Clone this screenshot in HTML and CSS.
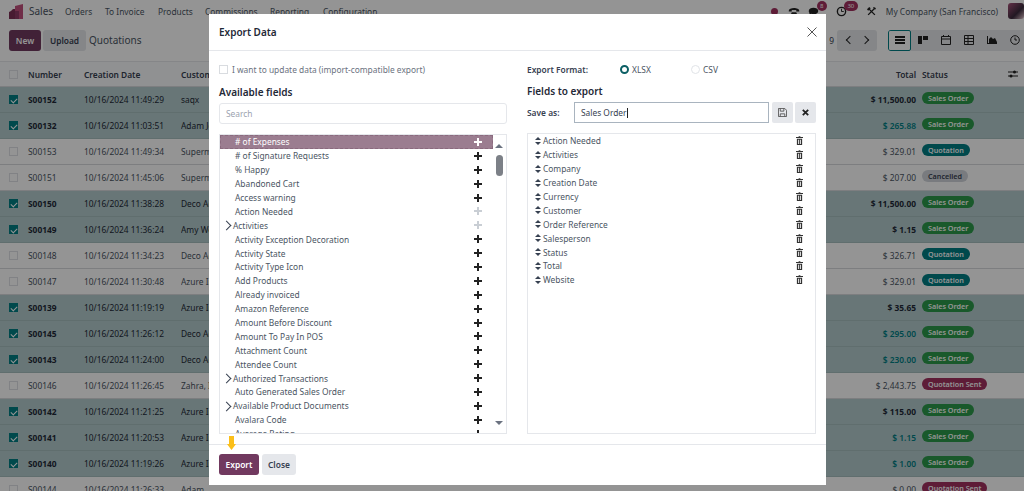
FILE: index.html
```html
<!DOCTYPE html>
<html lang="en">
<head>
<meta charset="utf-8">
<title>Quotations - Export Data</title>
<link rel="stylesheet" href="styles.css">
</head>
<body>
<div class="page">
  <header class="nav">
    <svg class="logo" viewBox="0 0 15 16"><path fill="#7c2f55" d="M0 9l2-1 2-2 2 0v10H0z"/><path fill="#c2507c" d="M6 3l8-2v15H6z"/><path fill="#8e3a64" d="M6 8h4v8H6z"/></svg>
    <span class="brand">Sales</span>
    <span class="m m1">Orders</span><span class="m m2">To Invoice</span><span class="m m3">Products</span><span class="m m4">Commissions</span><span class="m m5">Reporting</span><span class="m m6">Configuration</span>
    <div class="nav-right">
      <span class="dot"></span>
      <svg class="ni phone" viewBox="0 0 16 14"><path fill="#222" d="M1 6c0-5 14-5 14 0v1h-4V5H5v2H1zM5 8h6l2 5H3z"/></svg>
      <span class="ni-wrap chat"><svg class="ni" viewBox="0 0 14 12"><path fill="#222" d="M1 5c0-5 12-5 12 0s-7 5-9 4l-3 2 1-3c-1-1-1-2-1-3z"/></svg><b class="badge">8</b></span>
      <span class="ni-wrap act"><svg class="ni" viewBox="0 0 12 12"><circle cx="6" cy="6" r="4.500" fill="none" stroke="#222" stroke-width="1.500"/><path d="M6 3v3h2.500" fill="none" stroke="#222"/></svg><b class="badge wide">30</b></span>
      <svg class="ni tools" viewBox="0 0 12 12"><path d="M2.500 2.500l8 8M10 2l-8.500 8.500" stroke="#222" stroke-width="1.800"/><path d="M0 3l3-3 2 1.500L1.500 5zM8 0c2 0 4 1 4 3l-2 0-1-1z" fill="#222"/></svg>
      <span class="company">My Company (San Francisco)</span>
      <span class="avatar"></span>
    </div>
  </header>

  <div class="panel">
    <button class="btn primary new">New</button>
    <button class="btn upload">Upload</button>
    <span class="crumb">Quotations</span>
    <div class="panel-right">
      <span class="pager-tail">9</span>
      <span class="group"><i class="chev l"></i><i class="chev r"></i></span>
      <span class="views">
        <span class="view on"><svg viewBox="0 0 10 8"><path fill="#222" d="M0 0h10v2H0zM0 3h10v2H0zM0 6h10v2H0z"/></svg></span>
        <span class="view"><svg viewBox="0 0 10 8"><path fill="#222" d="M0 0h4v8H0zM5 0h5v4H5z"/></svg></span>
        <span class="view"><svg viewBox="0 0 10 10"><path fill="none" stroke="#222" d="M.5 1.500h9v8h-9zM.5 4h9M2.500 0v2M7.500 0v2"/></svg></span>
        <span class="view"><svg viewBox="0 0 10 10"><path fill="none" stroke="#222" d="M.5.500h9v9h-9zM.5 3.500h9M.5 6.500h9M4 .5v9"/></svg></span>
        <span class="view"><svg viewBox="0 0 10 8"><path fill="#222" d="M0 0h1v7h9v1H0zM2 3l2-2 2 2 2-1 2 4v1H2z"/></svg></span>
        <span class="view"><svg viewBox="0 0 10 10"><circle cx="5" cy="5" r="4.300" fill="none" stroke="#222"/><path d="M5 2.500V5h2" fill="none" stroke="#222"/></svg></span>
      </span>
    </div>
  </div>

  <div class="table">
    <div class="row head">
      <span class="check"></span><span class="c-num">Number</span><span class="c-date">Creation Date</span><span class="c-cust">Customer</span><span class="c-total">Total</span><span class="c-status">Status</span>
      <svg class="tune" viewBox="0 0 10 10"><path d="M0 3h10M0 7h10" stroke="#222"/><circle cx="6.500" cy="3" r="1.500" fill="#222"/><circle cx="3" cy="7" r="1.500" fill="#222"/></svg>
    </div>
    <div class="row sel"><span class="check on"></span><span class="c-num">S00152</span><span class="c-date">10/16/2024 11:49:29</span><span class="c-cust">saqx</span><span class="c-total strong">$ 11,500.00</span><span class="c-status"><em class="tag green">Sales Order</em></span></div>
    <div class="row sel"><span class="check on"></span><span class="c-num">S00132</span><span class="c-date">10/16/2024 11:03:51</span><span class="c-cust">Adam Jones</span><span class="c-total teal">$ 265.88</span><span class="c-status"><em class="tag green">Sales Order</em></span></div>
    <div class="row"><span class="check"></span><span class="c-num">S00153</span><span class="c-date">10/16/2024 11:49:34</span><span class="c-cust">Supermarket</span><span class="c-total">$ 329.01</span><span class="c-status"><em class="tag blue">Quotation</em></span></div>
    <div class="row"><span class="check"></span><span class="c-num">S00151</span><span class="c-date">10/16/2024 11:45:06</span><span class="c-cust">Supermarket</span><span class="c-total">$ 207.00</span><span class="c-status"><em class="tag grey">Cancelled</em></span></div>
    <div class="row sel"><span class="check on"></span><span class="c-num">S00150</span><span class="c-date">10/16/2024 11:38:28</span><span class="c-cust">Deco Addict</span><span class="c-total strong">$ 11,500.00</span><span class="c-status"><em class="tag green">Sales Order</em></span></div>
    <div class="row sel"><span class="check on"></span><span class="c-num">S00149</span><span class="c-date">10/16/2024 11:36:24</span><span class="c-cust">Amy Wong</span><span class="c-total strong">$ 1.15</span><span class="c-status"><em class="tag green">Sales Order</em></span></div>
    <div class="row"><span class="check"></span><span class="c-num">S00148</span><span class="c-date">10/16/2024 11:34:23</span><span class="c-cust">Deco Addict</span><span class="c-total">$ 326.71</span><span class="c-status"><em class="tag blue">Quotation</em></span></div>
    <div class="row"><span class="check"></span><span class="c-num">S00147</span><span class="c-date">10/16/2024 11:30:48</span><span class="c-cust">Azure Interior</span><span class="c-total">$ 329.01</span><span class="c-status"><em class="tag blue">Quotation</em></span></div>
    <div class="row sel"><span class="check on"></span><span class="c-num">S00139</span><span class="c-date">10/16/2024 11:19:19</span><span class="c-cust">Azure Interior</span><span class="c-total strong">$ 35.65</span><span class="c-status"><em class="tag green">Sales Order</em></span></div>
    <div class="row sel"><span class="check on"></span><span class="c-num">S00145</span><span class="c-date">10/16/2024 11:26:12</span><span class="c-cust">Deco Addict</span><span class="c-total teal">$ 295.00</span><span class="c-status"><em class="tag green">Sales Order</em></span></div>
    <div class="row sel"><span class="check on"></span><span class="c-num">S00143</span><span class="c-date">10/16/2024 11:24:00</span><span class="c-cust">Deco Addict</span><span class="c-total teal">$ 230.00</span><span class="c-status"><em class="tag green">Sales Order</em></span></div>
    <div class="row"><span class="check"></span><span class="c-num">S00146</span><span class="c-date">10/16/2024 11:26:45</span><span class="c-cust">Zahra, Inc</span><span class="c-total">$ 2,443.75</span><span class="c-status"><em class="tag plum">Quotation Sent</em></span></div>
    <div class="row sel"><span class="check on"></span><span class="c-num">S00142</span><span class="c-date">10/16/2024 11:21:25</span><span class="c-cust">Azure Interior</span><span class="c-total strong">$ 115.00</span><span class="c-status"><em class="tag green">Sales Order</em></span></div>
    <div class="row sel"><span class="check on"></span><span class="c-num">S00141</span><span class="c-date">10/16/2024 11:20:53</span><span class="c-cust">Azure Interior</span><span class="c-total teal">$ 1.15</span><span class="c-status"><em class="tag green">Sales Order</em></span></div>
    <div class="row sel"><span class="check on"></span><span class="c-num">S00140</span><span class="c-date">10/16/2024 11:19:26</span><span class="c-cust">Azure Interior</span><span class="c-total teal">$ 1.00</span><span class="c-status"><em class="tag green">Sales Order</em></span></div>
    <div class="row"><span class="check"></span><span class="c-num">S00144</span><span class="c-date">10/16/2024 11:26:33</span><span class="c-cust">Adam</span><span class="c-total">$ 0.00</span><span class="c-status"><em class="tag plum">Quotation Sent</em></span></div>
  </div>
</div>

<div class="backdrop"></div>

<section class="modal">
  <div class="m-head">
    <h4>Export Data</h4>
    <svg class="close" viewBox="0 0 10 10"><path d="M.5.500l9 9M9.500.500l-9 9" stroke="#555" stroke-width="1"/></svg>
  </div>
  <div class="m-body">
    <div class="col">
      <label class="compat"><span class="box"></span>I want to update data (import-compatible export)</label>
      <h5 class="avail">Available fields</h5>
      <div class="search">Search</div>
      <div class="list left">
        <div class="items">
          <div class="f active"><span>#&nbsp;of Expenses</span><i class="plus"></i></div>
          <div class="f"><span># of Signature Requests</span><i class="plus"></i></div>
          <div class="f"><span>% Happy</span><i class="plus"></i></div>
          <div class="f"><span>Abandoned Cart</span><i class="plus"></i></div>
          <div class="f"><span>Access warning</span><i class="plus"></i></div>
          <div class="f"><span>Action Needed</span><i class="plus faint"></i></div>
          <div class="f exp"><span>Activities</span><i class="plus faint"></i></div>
          <div class="f"><span>Activity Exception Decoration</span><i class="plus"></i></div>
          <div class="f"><span>Activity State</span><i class="plus"></i></div>
          <div class="f"><span>Activity Type Icon</span><i class="plus"></i></div>
          <div class="f"><span>Add Products</span><i class="plus"></i></div>
          <div class="f"><span>Already invoiced</span><i class="plus"></i></div>
          <div class="f"><span>Amazon Reference</span><i class="plus"></i></div>
          <div class="f"><span>Amount Before Discount</span><i class="plus"></i></div>
          <div class="f"><span>Amount To Pay In POS</span><i class="plus"></i></div>
          <div class="f"><span>Attachment Count</span><i class="plus"></i></div>
          <div class="f"><span>Attendee Count</span><i class="plus"></i></div>
          <div class="f exp"><span>Authorized Transactions</span><i class="plus"></i></div>
          <div class="f"><span>Auto Generated Sales Order</span><i class="plus"></i></div>
          <div class="f exp"><span>Available Product Documents</span><i class="plus"></i></div>
          <div class="f"><span>Avalara Code</span><i class="plus"></i></div>
          <div class="f"><span>Average Rating</span><i class="plus"></i></div>
        </div>
        <div class="scroll"><i class="up"></i><b class="thumb"></b><i class="down"></i></div>
      </div>
    </div>
    <div class="col wide-col">
      <div class="format"><b>Export Format:</b><span class="radio on"></span><span class="r-label">XLSX</span><span class="radio"></span><span class="r-label">CSV</span></div>
      <h5 class="tofields">Fields to export</h5>
      <div class="save"><b>Save as:</b><div class="input">Sales Order<span class="caret"></span></div>
        <span class="sq"><svg viewBox="0 0 10 10"><path fill="none" stroke="#555" d="M.5.500h7l2 2v7h-9zM2.500.5v3h4v-3M2.500 9.500v-3h5v3"/></svg></span>
        <span class="sq"><svg viewBox="0 0 10 10"><path d="M2 2l6 6M8 2l-6 6" stroke="#222" stroke-width="2"/></svg></span>
      </div>
      <div class="list right">
        <div class="e"><i class="sort"></i><span>Action Needed</span><svg class="trash" viewBox="0 0 8 10"><path fill="#333" d="M3 0h2v1h3v1H0V1h3zM1 3h6v7H1zM2.500 4v5h1V4zM4.500 4v5h1V4z" fill-rule="evenodd"/></svg></div>
        <div class="e"><i class="sort"></i><span>Activities</span><svg class="trash" viewBox="0 0 8 10"><path fill="#333" d="M3 0h2v1h3v1H0V1h3zM1 3h6v7H1zM2.500 4v5h1V4zM4.500 4v5h1V4z" fill-rule="evenodd"/></svg></div>
        <div class="e"><i class="sort"></i><span>Company</span><svg class="trash" viewBox="0 0 8 10"><path fill="#333" d="M3 0h2v1h3v1H0V1h3zM1 3h6v7H1zM2.500 4v5h1V4zM4.500 4v5h1V4z" fill-rule="evenodd"/></svg></div>
        <div class="e"><i class="sort"></i><span>Creation Date</span><svg class="trash" viewBox="0 0 8 10"><path fill="#333" d="M3 0h2v1h3v1H0V1h3zM1 3h6v7H1zM2.500 4v5h1V4zM4.500 4v5h1V4z" fill-rule="evenodd"/></svg></div>
        <div class="e"><i class="sort"></i><span>Currency</span><svg class="trash" viewBox="0 0 8 10"><path fill="#333" d="M3 0h2v1h3v1H0V1h3zM1 3h6v7H1zM2.500 4v5h1V4zM4.500 4v5h1V4z" fill-rule="evenodd"/></svg></div>
        <div class="e"><i class="sort"></i><span>Customer</span><svg class="trash" viewBox="0 0 8 10"><path fill="#333" d="M3 0h2v1h3v1H0V1h3zM1 3h6v7H1zM2.500 4v5h1V4zM4.500 4v5h1V4z" fill-rule="evenodd"/></svg></div>
        <div class="e"><i class="sort"></i><span>Order Reference</span><svg class="trash" viewBox="0 0 8 10"><path fill="#333" d="M3 0h2v1h3v1H0V1h3zM1 3h6v7H1zM2.500 4v5h1V4zM4.500 4v5h1V4z" fill-rule="evenodd"/></svg></div>
        <div class="e"><i class="sort"></i><span>Salesperson</span><svg class="trash" viewBox="0 0 8 10"><path fill="#333" d="M3 0h2v1h3v1H0V1h3zM1 3h6v7H1zM2.500 4v5h1V4zM4.500 4v5h1V4z" fill-rule="evenodd"/></svg></div>
        <div class="e"><i class="sort"></i><span>Status</span><svg class="trash" viewBox="0 0 8 10"><path fill="#333" d="M3 0h2v1h3v1H0V1h3zM1 3h6v7H1zM2.500 4v5h1V4zM4.500 4v5h1V4z" fill-rule="evenodd"/></svg></div>
        <div class="e"><i class="sort"></i><span>Total</span><svg class="trash" viewBox="0 0 8 10"><path fill="#333" d="M3 0h2v1h3v1H0V1h3zM1 3h6v7H1zM2.500 4v5h1V4zM4.500 4v5h1V4z" fill-rule="evenodd"/></svg></div>
        <div class="e"><i class="sort"></i><span>Website</span><svg class="trash" viewBox="0 0 8 10"><path fill="#333" d="M3 0h2v1h3v1H0V1h3zM1 3h6v7H1zM2.500 4v5h1V4zM4.500 4v5h1V4z" fill-rule="evenodd"/></svg></div>
      </div>
    </div>
  </div>
  <div class="m-foot">
    <svg class="arrow" viewBox="0 0 9 14"><path fill="#fbbf1a" d="M2 0h5v8h2l-4.500 6L0 8h2z"/></svg>
    <button class="btn primary export">Export</button>
    <button class="btn close-btn">Close</button>
  </div>
</section>
</body>
</html>
```

FILE: styles.css
```css
* { box-sizing: border-box; }
html, body { margin: 0; height: 491px; overflow: hidden; }
body { font-family: "Noto Sans", sans-serif; font-size: 8.4px; color: #374151; background: #fff; }
.page { height: 491px; overflow: hidden; }

.nav { height: 22px; display: flex; align-items: center; padding-left: 9px; background: #fff; font-size: 8.4px; color: #4b5563; }
.logo { width: 15px; height: 16px; flex: none; }
.brand { font-size: 10px; margin-left: 5px; width: 36px; }
.m { flex: none; }
.m1 { width: 40px; }
.m2 { width: 53px; }
.m3 { width: 47px; }
.m4 { width: 65px; }
.m5 { width: 53px; }
.nav-right { margin-left: auto; display: flex; align-items: center; height: 22px; }
.dot { width: 7px; height: 7px; border-radius: 50%; background: #a2315f; margin-right: 10px; }
.ni { display: block; width: 11px; height: 11px; }
.phone { width: 12px; margin-right: 8px; }
.ni-wrap { position: relative; display: block; }
.chat { margin-right: 17px; }
.act { margin-right: 20px; }
.tools { width: 9px; height: 9px; margin-right: 10px; }
.badge { position: absolute; left: 9px; top: -5px; min-width: 10px; height: 10px; padding: 0 1px; border-radius: 5px; background: #a2315f; color: #fff; font-size: 6px; font-weight: 400; line-height: 10px; text-align: center; }
.badge.wide { min-width: 14px; left: 8px; }
.company { margin-right: 10px; }
.avatar { width: 16px; height: 16px; border-radius: 3px; background: linear-gradient(135deg, #a8527a, #3b2b3c 60%, #e6c7cf); }

.panel { height: 40px; display: flex; align-items: center; padding: 0 0 3px 9px; border-bottom: 1px solid #e5e7eb; gap: 2px; background: #fff; }
.btn { height: 21px; border: 0; border-radius: 3px; background: #e5e7eb; color: #374151; font: 600 8.4px "Noto Sans", sans-serif; padding: 0; }
.primary { background: #71395f; color: #fff; }
.new { width: 32px; }
.upload { width: 43px; }
.crumb { font-size: 10px; color: #4b5563; margin-left: 1px; }
.panel-right { margin-left: auto; display: flex; align-items: center; }
.pager-tail { margin-right: 3px; }
.group { width: 40px; height: 21px; border-radius: 3px; background: #e5e7eb; display: flex; align-items: center; justify-content: space-around; padding: 0 5px; margin-right: 11px; }
.chev { width: 6px; height: 6px; border-left: 1px solid #222; border-bottom: 1px solid #222; transform: rotate(45deg); }
.chev.r { transform: rotate(225deg); }
.views { display: flex; width: 136px; height: 21px; background: #e5e7eb; border-radius: 3px 0 0 3px; overflow: hidden; }
.view { width: 23px; flex: none; display: flex; align-items: center; justify-content: center; }
.view svg { width: 10px; height: 10px; }
.view.on { background: #fff; outline: 1px solid #017e84; outline-offset: -1px; border-radius: 2px; }

.row { height: 26px; display: flex; align-items: center; padding-left: 9px; border-bottom: 1px solid #d8dadd; background: #fff; font-size: 8.4px; color: #4b5563; }
.row.head { height: 25px; font-weight: 600; color: #374151; background: #f9fafb; }
.row.sel { background: #b3cccd; border-bottom-color: #a5bdbe; color: #1f2937; }
.row.sel .c-num { font-weight: 700; }
.check { width: 9px; height: 9px; flex: none; border: 1px solid #dfe1e5; margin-right: 10px; }
.check.on { background: #017e84; border-color: #017e84; position: relative; }
.check.on::after { content: ""; position: absolute; left: 2px; top: 1px; width: 3px; height: 5px; border: solid #fff; border-width: 0 1px 1px 0; transform: rotate(45deg); }
.c-num { width: 56px; flex: none; }
.c-date { width: 97px; flex: none; }
.c-cust { flex: 1; min-width: 0; overflow: hidden; white-space: nowrap; }
.c-total { width: 80px; flex: none; text-align: right; margin-right: 6px; }
.c-status { width: 102px; flex: none; display: flex; }
.head .c-status { width: 86px; }
.strong { font-weight: 700; color: #1f2937; }
.teal { color: #017e84; font-weight: 600; }
.tag { display: block; margin-bottom: 3px; font-style: normal; font-size: 7.200px; font-weight: 600; color: #fff; height: 12px; line-height: 12px; border-radius: 6px; padding: 0 6px; }
.green { background: #2b9a4a; }
.blue { background: #017e84; }
.grey { background: #d1d5db; color: #374151; }
.plum { background: #a2315f; }
.tune { width: 10px; height: 10px; flex: none; margin-right: 6px; }

.backdrop { position: fixed; inset: 0; background: rgba(0, 0, 0, .42); }

.modal { position: fixed; left: 209px; top: 14px; width: 617px; height: 471px; background: #fff; display: flex; flex-direction: column; }
.m-head { height: 37px; flex: none; padding: 0 10px; border-bottom: 1px solid #e5e7eb; display: flex; align-items: center; justify-content: space-between; }
h4 { margin: 0; font-size: 10px; font-weight: 600; color: #1f2937; }
.close { width: 10px; height: 10px; margin-right: -1px; }
.m-body { flex: none; height: 394px; padding: 0 10px; display: flex; gap: 20px; border-bottom: 1px solid #e5e7eb; }
.col { width: 288px; flex: none; }
.wide-col { width: 289px; }
.compat { display: flex; align-items: center; height: 12px; margin-top: 12px; color: #6b7280; }
.box { width: 9px; height: 9px; border: 1px solid #d9dce0; margin-right: 4px; }
h5 { margin: 0; font-size: 10px; font-weight: 600; color: #1f2937; }
.avail { margin-top: 10px; height: 15px; line-height: 15px; }
.search { margin-top: 3px; height: 21px; border: 1px solid #e5e7eb; border-radius: 3px; padding-left: 6px; line-height: 19px; color: #9ca3af; }
.list { height: 300px; border: 1px solid #e5e7eb; overflow: hidden; }
.left { margin-top: 10px; display: flex; }
.items { flex: 1; }
.f { height: 13.900px; padding: 0 11px 0 15px; display: flex; align-items: center; justify-content: space-between; position: relative; color: #4b5563; }
.f.active { background: #9b7d90; color: #fff; outline: 1px dashed #8a6a7e; outline-offset: -1px; }
.f.active .plus { --p: #fff; }
.f.exp { padding-left: 13px; }
.exp::before { content: ""; position: absolute; left: 3px; top: 4px; width: 6px; height: 6px; border: solid #374151; border-width: 1px 1px 0 0; transform: rotate(45deg); }
.plus { --p: #222; width: 8px; height: 8px; flex: none; background: linear-gradient(var(--p), var(--p)) center / 8px 2px no-repeat, linear-gradient(var(--p), var(--p)) center / 2px 8px no-repeat; }
.plus.faint { --p: #c9ced4; }
.scroll { width: 13px; flex: none; position: relative; padding-top: 9px; }
.up, .down { display: block; width: 0; height: 0; border: 4px solid transparent; margin-left: 2px; }
.up { border-bottom: 4px solid #6b7280; border-top: 0; }
.down { border-top: 4px solid #6b7280; border-bottom: 0; position: absolute; bottom: 8px; }
.thumb { display: block; width: 7px; height: 21px; border-radius: 4px; background: #7c8087; margin: 7px 0 0 3px; }
.format { display: flex; align-items: center; height: 12px; margin-top: 12px; }
.format b { font-weight: 600; width: 93px; color: #374151; }
.radio { width: 9px; height: 9px; border-radius: 50%; border: 1px solid #e1e4e8; margin-right: 3px; }
.radio.on { border: 2.500px solid #0b5f64; }
.r-label { width: 59px; color: #4b5563; }
.tofields { margin-top: 10px; height: 13px; line-height: 13px; }
.save { display: flex; align-items: center; margin-top: 4px; height: 21px; }
.save b { font-weight: 600; width: 47px; flex: none; color: #374151; }
.input { width: 195px; height: 21px; flex: none; border: 1px solid #a9b4bf; padding-left: 6px; line-height: 19px; margin-right: 3px; }
.caret { display: inline-block; width: 1px; height: 10px; background: #222; vertical-align: -2px; }
.sq { width: 21px; height: 21px; flex: none; background: #e5e7eb; display: flex; align-items: center; justify-content: center; border-radius: 2px; }
.sq + .sq { margin-left: 2px; }
.sq svg { width: 9px; height: 9px; }
.right { margin-top: 10px; height: 301px; padding: 0 0 0 7px; }
.e { height: 13.900px; display: flex; align-items: center; color: #4b5563; padding-right: 12px; }
.e span { flex: 1; }
.sort { width: 6px; height: 8px; margin-right: 2px; position: relative; }
.sort::before, .sort::after { content: ""; position: absolute; left: 0; border: 3px solid transparent; }
.sort::before { top: 0; border-bottom: 3px solid #374151; border-top: 0; }
.sort::after { bottom: 0; border-top: 3px solid #374151; border-bottom: 0; }
.trash { width: 7px; height: 9px; flex: none; }
.m-foot { flex: 1; display: flex; align-items: center; padding: 0 10px 1px; gap: 3px; position: relative; }
.export { width: 40px; }
.close-btn { width: 34px; }
.arrow { position: absolute; left: 18px; top: -9px; width: 9px; height: 14px; }
```
